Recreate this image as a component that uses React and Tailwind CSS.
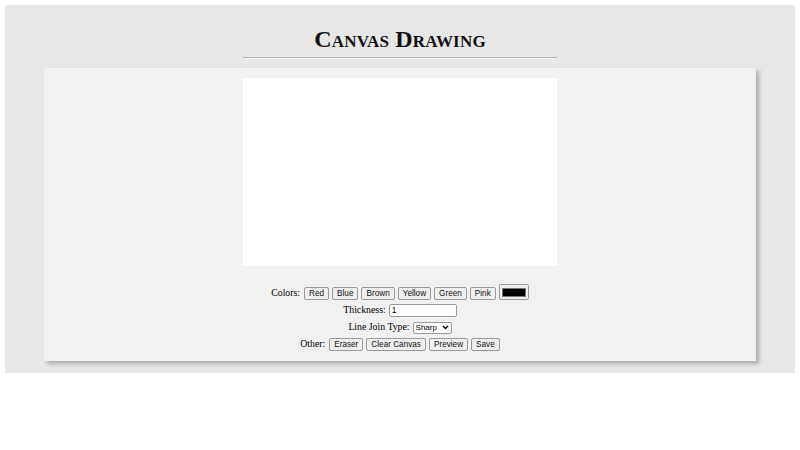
import React from 'react';

const Btn = ({ children }) => (
  <button className="h-[13px] px-1 flex items-center bg-[#efefef] border border-[#999] rounded-[2px] text-[8.2px] leading-[11px] text-[#111] font-['Liberation_Sans',Arial,sans-serif]">
    {children}
  </button>
);

const CanvasDrawing = () => {
  return (
    <div className="w-[800px] h-[450px] bg-white p-[5px] font-['Liberation_Serif','Times_New_Roman',serif]">
      <div className="bg-[#e7e7e7] h-[368px] flex flex-col items-center">
        <h1 className="mt-[19px] h-[30px] text-[24px] leading-[30px] font-bold text-[#111] [font-variant:small-caps] tracking-[0.2px]">
          Canvas Drawing
        </h1>
        <div className="mt-[3px] w-[314px] h-[2px] border-t border-[#b5b5b5] border-b border-b-[#f4f4f4]"></div>
        <div className="mt-[9px] w-[712px] h-[293px] bg-[#f1f1f1] shadow-[3px_3px_4px_rgba(0,0,0,0.25)] flex flex-col items-center pt-[10px]">
          <div className="w-[314px] h-[188px] bg-white"></div>

          {/* drawing controls */}
          <div className="mt-[18px] flex flex-col items-center text-[9.8px] text-black">
            <div className="h-[18px] flex items-center gap-[3px]">
              <span className="mr-[1px]">Colors:</span>
              <Btn>Red</Btn>
              <Btn>Blue</Btn>
              <Btn>Brown</Btn>
              <Btn>Yellow</Btn>
              <Btn>Green</Btn>
              <Btn>Pink</Btn>
              <div className="w-[30px] h-[16px] bg-[#efefef] border border-[#999] rounded-[2px] flex items-center justify-center mb-[2px]">
                <div className="w-[24px] h-[9px] bg-black border border-[#777]"></div>
              </div>
            </div>
            <div className="h-[17px] flex items-center gap-[3px]">
              <span>Thickness:</span>
              <div className="w-[68px] h-[13px] bg-white border border-[#999] rounded-[2px] pl-[2px] text-[8.5px] leading-[11px] font-['Liberation_Sans',Arial,sans-serif]">
                1
              </div>
            </div>
            <div className="h-[17px] flex items-center gap-[3px]">
              <span>Line Join Type:</span>
              <div className="w-[39px] h-[12px] bg-white border border-[#999] rounded-[2px] pl-[2px] flex items-center justify-between text-[8px] font-['Liberation_Sans',Arial,sans-serif]">
                <span>Sharp</span>
                <svg width="7" height="5" viewBox="0 0 7 5" className="mr-[2px]">
                  <path d="M1 1 L3.5 3.5 L6 1" fill="none" stroke="#000" strokeWidth="1.4" />
                </svg>
              </div>
            </div>
            <div className="h-[17px] flex items-center gap-[3px]">
              <span className="mr-[1px]">Other:</span>
              <Btn>Eraser</Btn>
              <Btn>Clear Canvas</Btn>
              <Btn>Preview</Btn>
              <Btn>Save</Btn>
            </div>
          </div>
        </div>
      </div>
    </div>
  );
};

export default CanvasDrawing;
